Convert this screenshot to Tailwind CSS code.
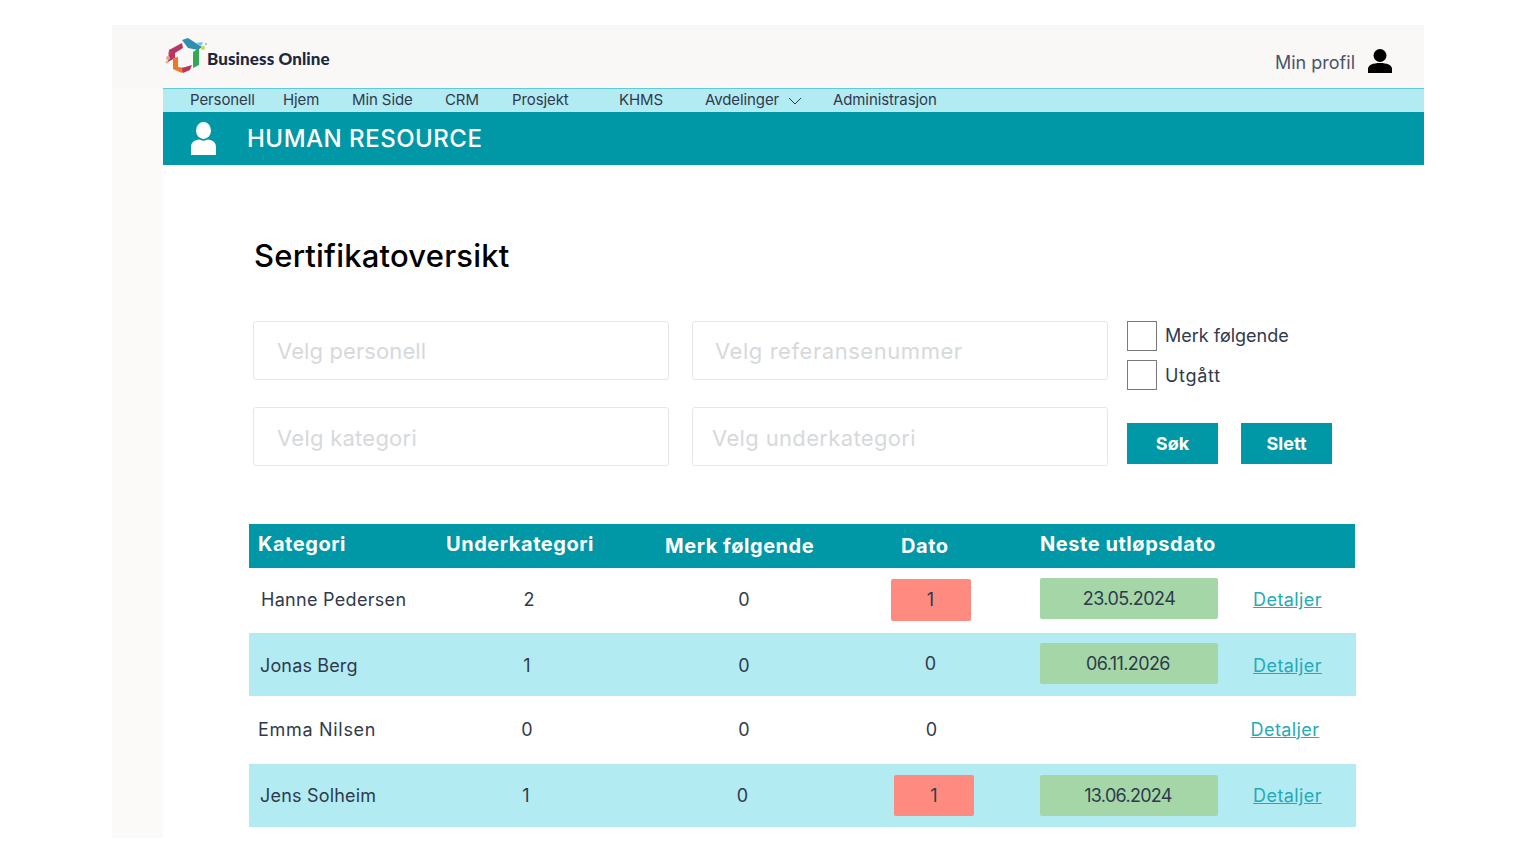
<!doctype html>
<html lang="no">
<head>
<meta charset="utf-8">
<title>Sertifikatoversikt</title>
<script src="https://cdn.jsdelivr.net/npm/@tailwindcss/browser@4"></script>
</head>
<body class="bg-white font-['Inter','Liberation_Sans',sans-serif] text-[#263238] overflow-hidden">
<div class="h-[864px] pt-[25px] pl-[112px]">
  <div class="w-[1312px] h-[813px] bg-[#fbfaf9] pl-[51px]">
    <header class="h-[63px] w-[1312px] bg-[#faf8f7] flex items-start justify-between -ml-[51px] pl-[53px]">
      <div class="flex items-center mt-[13px]">
        <svg class="w-[43px] h-[37px]" viewBox="0 0 43 37">
          <path d="M4 12 L17 5 L18 10 L10 15 V20 L3 24 Z" fill="#b9355f"/>
          <path d="M8 20 L13 19 V29 L21 30 L17 35 L8 31 Z" fill="#ee7625"/>
          <path d="M17 30 L27 27 L25 32 L18 35 Z" fill="#b9355f"/>
          <path d="M17 2 L23 0 L37 9 L33 12 L23 10 Z" fill="#2f8fb0"/>
          <path d="M28 14 L34 10 V27 L28 30 Z" fill="#35a853"/>
          <path d="M31 5 L36 8 L38 4 Z" fill="#63c9dc"/>
          <circle cx="38" cy="10" r="2" fill="#c8d84b"/>
          <circle cx="41" cy="6" r="1" fill="#63c9dc"/>
          <circle cx="3" cy="20" r="2" fill="#e8a0a8"/>
          <circle cx="5" cy="15" r="1.5" fill="#c94560"/>
          <circle cx="2" cy="24" r="1.5" fill="#f0b070"/>
        </svg>
        <span class="ml-[-1px] mt-[5px] font-['Lato',sans-serif] font-black text-[17px] text-[#1c2742] tracking-[0.1px]">Business Online</span>
      </div>
      <div class="flex items-center mt-[24px] mr-[32px]">
        <span class="text-[18px] text-[#4a5568] tracking-[0px]">Min profil</span>
        <svg class="ml-[13px] -mt-[3px] w-[24px] h-[24px]" viewBox="0 0 24 24" fill="#000">
          <circle cx="12" cy="6.5" r="6.5"/>
          <path d="M0 24 V20 C0 16 5 14 12 14 C19 14 24 16 24 20 V24 Z"/>
        </svg>
      </div>
    </header>
    <nav class="h-[24px] bg-[#b2ebf2] border-t border-[#5fcbd5] flex items-center pl-[27px] text-[15px] text-[#2f3a4d] tracking-[-0.1px]">
      <span class="w-[93px]">Personell</span>
      <span class="w-[69px]">Hjem</span>
      <span class="w-[93px]">Min Side</span>
      <span class="w-[67px]">CRM</span>
      <span class="w-[107px]">Prosjekt</span>
      <span class="w-[86px]">KHMS</span>
      <span class="w-[128px] flex items-center">Avdelinger
        <svg class="ml-[9px] w-[14px] h-[8px]" viewBox="0 0 14 8" fill="none" stroke="#2f3a4d" stroke-width="1"><path d="M1 1 L7 7 L13 1"/></svg>
      </span>
      <span>Administrasjon</span>
    </nav>
    <div class="h-[53px] bg-[#0097a7] flex items-center pl-[28px] text-white">
      <svg class="w-[25px] h-[33px] -mt-[1px]" viewBox="0 0 25 33" fill="#fff">
        <ellipse cx="12.5" cy="8.5" rx="7.5" ry="8.5"/>
        <path d="M0 33 V25 C0 20 4 18 8 17.5 C11 19 14 19 17 17.5 C21 18 25 20 25 25 V33 Z"/>
      </svg>
      <h2 class="ml-[31px] text-[24px] font-medium tracking-[0.5px]">HUMAN RESOURCE</h2>
    </div>
    <main class="h-[673px] bg-white pt-[71px]">
      <h1 class="ml-[91px] h-[40px] leading-[40px] text-[31px] font-medium text-black tracking-[0.2px]">Sertifikatoversikt</h1>
      <section class="mt-[45px] ml-[90px] flex">
        <div class="grid grid-cols-[416px_416px] gap-x-[23px] gap-y-[27px] w-[855px]">
          <input class="h-[59px] border border-[#e4e7e8] rounded-[3px] pl-[23px] text-[22px] tracking-[0.1px] placeholder:text-[#d6d9db]" placeholder="Velg personell">
          <input class="h-[59px] border border-[#e4e7e8] rounded-[3px] pl-[22px] text-[22px] tracking-[0.55px] placeholder:text-[#d6d9db]" placeholder="Velg referansenummer">
          <input class="h-[59px] border border-[#e4e7e8] rounded-[3px] pl-[23px] pt-[2px] text-[22px] tracking-[0.25px] placeholder:text-[#d6d9db]" placeholder="Velg kategori">
          <input class="h-[59px] border border-[#e4e7e8] rounded-[3px] pl-[19px] pt-[2px] text-[22px] tracking-[0.35px] placeholder:text-[#d6d9db]" placeholder="Velg underkategori">
        </div>
        <div class="ml-[19px]">
          <label class="flex items-center h-[30px] text-[18px] text-[#2f3a4d]"><span class="w-[30px] h-[30px] border border-[#7b7b7b] bg-white"></span><span class="ml-[8px] -mt-[2px]">Merk følgende</span></label>
          <label class="flex items-center h-[30px] mt-[9px] text-[18px] text-[#2f3a4d]"><span class="w-[30px] h-[30px] border border-[#7b7b7b] bg-white"></span><span class="ml-[8px] tracking-[0.7px]">Utgått</span></label>
          <div class="flex gap-[23px] mt-[33px]">
            <button class="w-[91px] h-[41px] bg-[#0097a7] text-white font-bold text-[18px]">Søk</button>
            <button class="w-[91px] h-[41px] bg-[#0097a7] text-white font-bold text-[18px]">Slett</button>
          </div>
        </div>
      </section>
      <section class="mt-[58px] ml-[86px] w-[1107px] text-[18px] text-[#2f3a4d]">
        <div class="h-[44px] w-[1106px] bg-[#0097a7] text-white font-bold text-[20px] tracking-[0.55px] flex items-center">
          <span class="w-[197px] pl-[9px] -mt-[5px]">Kategori</span>
          <span class="w-[219px] -mt-[5px]">Underkategori</span>
          <span class="w-[236px]">Merk følgende</span>
          <span class="w-[139px]">Dato</span>
          <span class="-mt-[5px]">Neste utløpsdato</span>
        </div>
        <div class="grid grid-cols-[181px_198px_232px_140px_218px_138px] items-center h-[65px] pb-[2px]">
          <span class="pl-[12px] tracking-[0.3px]">Hanne Pedersen</span>
          <span class="text-center">2</span>
          <span class="text-center">0</span>
          <div class="flex justify-center"><span class="w-[80px] h-[42px] ml-[1px] rounded-[2px] bg-[#ff8a80] flex items-center justify-center">1</span></div>
          <div class="pl-[40px]"><span class="h-[41px] w-[178px] rounded-[2px] bg-[#a5d6a7] flex items-center justify-center -mt-[2px] tracking-[-0.55px]">23.05.2024</span></div>
          <a href="#" class="text-center text-[#26a9b8] underline tracking-[0.4px] pl-[1px]">Detaljer</a>
        </div>
        <div class="grid grid-cols-[181px_198px_232px_140px_218px_138px] items-center h-[63px] pt-[2px] bg-[#b2ebf2]">
          <span class="pl-[11px] tracking-[0.15px]">Jonas Berg</span>
          <span class="text-center pr-[4px]">1</span>
          <span class="text-center">0</span>
          <span class="text-center -mt-[4px] pl-[1px]">0</span>
          <div class="pl-[40px]"><span class="h-[41px] w-[178px] rounded-[2px] bg-[#a5d6a7] flex items-center justify-center -mt-[4px] pr-[2px] tracking-[-0.6px]">06.11.2026</span></div>
          <a href="#" class="text-center text-[#26a9b8] underline tracking-[0.4px] pl-[1px]">Detaljer</a>
        </div>
        <div class="grid grid-cols-[181px_198px_232px_140px_218px_138px] items-center h-[68px] pb-[2px]">
          <span class="pl-[9px] tracking-[0.7px]">Emma Nilsen</span>
          <span class="text-center pr-[4px]">0</span>
          <span class="text-center">0</span>
          <span class="text-center pl-[3px]">0</span>
          <span></span>
          <a href="#" class="text-center text-[#26a9b8] underline tracking-[0.4px] pr-[4px]">Detaljer</a>
        </div>
        <div class="grid grid-cols-[181px_198px_232px_140px_218px_138px] items-center h-[63px] bg-[#b2ebf2]">
          <span class="pl-[11px] tracking-[0.2px]">Jens Solheim</span>
          <span class="text-center pr-[6px]">1</span>
          <span class="text-center pr-[3px]">0</span>
          <div class="flex justify-center"><span class="w-[80px] h-[41px] ml-[8px] rounded-[2px] bg-[#ff8a80] flex items-center justify-center">1</span></div>
          <div class="pl-[40px]"><span class="h-[41px] w-[178px] rounded-[2px] bg-[#a5d6a7] flex items-center justify-center pr-[2px] tracking-[-0.7px]">13.06.2024</span></div>
          <a href="#" class="text-center text-[#26a9b8] underline tracking-[0.4px] pl-[1px]">Detaljer</a>
        </div>
      </section>
    </main>
  </div>
</div>
</body>
</html>
